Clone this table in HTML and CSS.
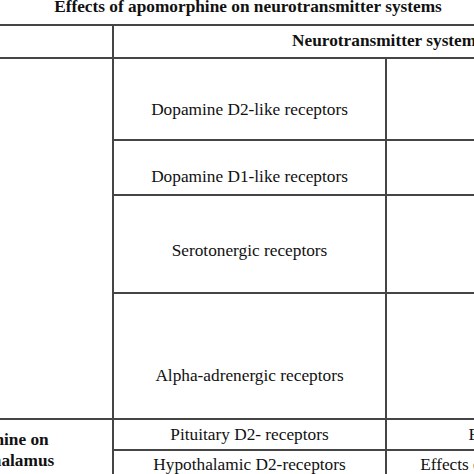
FILE: index.html
```html
<!DOCTYPE html>
<html lang="en">
<head>
<meta charset="utf-8">
<title>Effects of apomorphine on neurotransmitter systems</title>
<link rel="stylesheet" href="styles.css">
</head>
<body>
<div class="page">
  <h1 class="title">Effects of apomorphine on neurotransmitter systems</h1>
  <div class="table">
    <div class="cell"></div>
    <div class="cell head span-cols">Neurotransmitter systems</div>

    <div class="cell span-4"></div>
    <div class="cell rec row-d2">Dopamine D2-like receptors</div>
    <div class="cell"></div>

    <div class="cell rec row-d1">Dopamine D1-like receptors</div>
    <div class="cell"></div>

    <div class="cell rec row-5ht">Serotonergic receptors</div>
    <div class="cell"></div>

    <div class="cell rec row-alpha">Alpha-adrenergic receptors</div>
    <div class="cell"></div>

    <div class="cell side span-2"><div>Effects of apomorphine on</div><div>pituitary and hypothalamus</div></div>
    <div class="cell rec row-short">Pituitary D2- receptors</div>
    <div class="cell rec row-short">Effects on PRL</div>

    <div class="cell rec row-last">Hypothalamic D2-receptors</div>
    <div class="cell rec row-last">Effects on hormone secretion</div>
  </div>
</div>
</body>
</html>
```

FILE: styles.css
```css
html, body {
  margin: 0;
  padding: 0;
  background: #ffffff;
}

body {
  overflow: hidden;
  width: 474px;
  height: 474px;
  font-family: "Liberation Serif", "Times New Roman", serif;
  font-size: 17.3px;
  color: #111111;
}

.title {
  margin: 0 0 10px 0;
  padding-left: 22px;
  font-size: 17.3px;
  line-height: 14px;
  font-weight: bold;
  text-align: center;
  white-space: nowrap;
}

.table {
  display: grid;
  width: max-content;
  margin-left: -210px;
  grid-template-columns: 322px 271px 269px;
  grid-template-rows: 31px 80px 53px 96px 124px 29px 60px;
  gap: 2px;
  padding-top: 2px;
  background: #454545;
}

.cell {
  background: #ffffff;
  line-height: 20px;
  text-align: center;
  white-space: nowrap;
}

.span-cols {
  grid-column: span 2;
}

.span-4 {
  grid-row: span 4;
}

.span-2 {
  grid-row: span 2;
}

.head {
  font-weight: bold;
  padding-top: 5px;
  padding-left: 5px;
}

.row-d2 {
  padding-top: 41px;
}

.row-d1 {
  padding-top: 26px;
}

.row-5ht {
  padding-top: 45px;
}

.row-alpha {
  padding-top: 72px;
}

.row-short {
  padding-top: 5px;
}

.row-last {
  padding-top: 4px;
}

.side {
  font-weight: bold;
  line-height: 21px;
  padding-top: 9px;
}
```
